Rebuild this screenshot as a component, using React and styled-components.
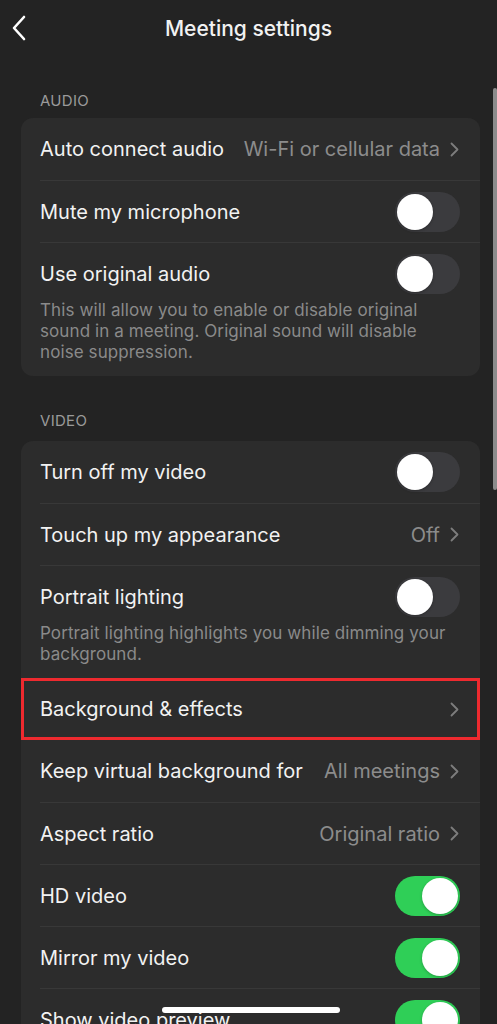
import styled, { createGlobalStyle } from "styled-components";

const GlobalStyle = createGlobalStyle`
  html, body {
    margin: 0;
    padding: 0;
    background: #232323;
  }
  body {
    font-family: Inter, "Noto Sans", sans-serif;
    -webkit-font-smoothing: antialiased;
  }
`;

const Screen = styled.div`
  position: relative;
  width: 497px;
  height: 1024px;
  overflow: hidden;
  background: #232323;
  color: #f2f2f2;
`;

const Header = styled.div`
  height: 56px;
  display: grid;
  grid-template-columns: 56px 1fr 56px;
  align-items: center;
`;

const BackButton = styled.div`
  display: flex;
  align-items: center;
  padding-left: 11px;
`;

const Title = styled.div`
  text-align: center;
  font-size: 21px;
  font-weight: 500;
`;

const SectionLabel = styled.div`
  padding: 35px 0 0 40px;
  height: ${(p) => (p.$tall ? "30px" : "27px")};
  font-size: 15px;
  color: #9a9a9a;
  letter-spacing: 0.3px;
`;

const Card = styled.div`
  margin: 0 17px 0 21px;
  background: #2c2c2c;
  border-radius: 12px;
  overflow: hidden;
`;

const Item = styled.div`
  position: relative;
  padding-left: 19px;
  ${(p) => (p.$highlight ? "outline: 3px solid #ee2a2f; outline-offset: -3px;" : "")}
  & + & > div:first-child {
    border-top: 1px solid #383838;
  }
`;

const Row = styled.div`
  height: 62px;
  box-sizing: border-box;
  display: flex;
  align-items: center;
  padding-right: 20px;
`;

const Label = styled.div`
  flex: 1;
  font-size: 20px;
  white-space: nowrap;
`;

const Value = styled.div`
  display: flex;
  align-items: center;
  gap: 10px;
  font-size: 20px;
  color: #8c8c8c;
  white-space: nowrap;
  padding-right: 1px;
`;

const Description = styled.div`
  margin-top: -4px;
  padding: 0 20px 13px 0;
  font-size: 17px;
  line-height: 21px;
  letter-spacing: 0.1px;
  color: #8a8a8a;
`;

const Track = styled.div`
  width: 65px;
  height: 40px;
  border-radius: 20px;
  background: ${(p) => (p.$on ? "#2fcf57" : "#3b3b3e")};
  display: flex;
  align-items: center;
  justify-content: ${(p) => (p.$on ? "flex-end" : "flex-start")};
  padding: 0 2px;
  box-sizing: border-box;
`;

const Knob = styled.div`
  width: 36px;
  height: 36px;
  border-radius: 50%;
  background: #ffffff;
  box-shadow: 0 1px 3px rgba(0, 0, 0, 0.25);
`;

const ScrollBar = styled.div`
  position: absolute;
  right: 0;
  top: 88px;
  width: 4px;
  height: 402px;
  border-radius: 2px;
  background: #8c8c8c;
`;

const HomeIndicator = styled.div`
  position: absolute;
  left: 162px;
  top: 1007px;
  width: 178px;
  height: 6px;
  border-radius: 3px;
  background: #ffffff;
`;

const Chevron = () => (
  <svg width="9" height="15" viewBox="0 0 9 15">
    <path d="M1.5 1.5 L7.5 7.5 L1.5 13.5" fill="none" stroke="#7d7d7d" strokeWidth="1.8" strokeLinecap="round" strokeLinejoin="round" />
  </svg>
);

const Toggle = ({ on }) => (
  <Track $on={on}>
    <Knob />
  </Track>
);

const Setting = ({ label, value, toggle, on, desc, highlight }) => (
  <Item $highlight={highlight}>
    <Row>
      <Label>{label}</Label>
      {toggle ? (
        <Toggle on={on} />
      ) : (
        <Value>
          {value}
          <Chevron />
        </Value>
      )}
    </Row>
    {desc && <Description>{desc}</Description>}
  </Item>
);

export default function App() {
  return (
    <Screen>
      <GlobalStyle />
      <Header>
        <BackButton>
          <svg width="16" height="26" viewBox="0 0 16 26">
            <path d="M13 2 L3 13 L13 24" fill="none" stroke="#ffffff" strokeWidth="2.6" strokeLinecap="round" strokeLinejoin="round" />
          </svg>
        </BackButton>
        <Title>Meeting settings</Title>
        <div />
      </Header>

      <SectionLabel>AUDIO</SectionLabel>
      <Card>
        <Setting label="Auto connect audio" value="Wi-Fi or cellular data" />
        <Setting label="Mute my microphone" toggle />
        <Setting
          label="Use original audio"
          toggle
          desc="This will allow you to enable or disable original sound in a meeting. Original sound will disable noise suppression."
        />
      </Card>

      <SectionLabel $tall>VIDEO</SectionLabel>
      <Card>
        <Setting label="Turn off my video" toggle />
        <Setting label="Touch up my appearance" value="Off" />
        <Setting
          label="Portrait lighting"
          toggle
          desc="Portrait lighting highlights you while dimming your background."
        />
        <Setting label="Background & effects" value="" highlight />
        <Setting label="Keep virtual background for" value="All meetings" />
        <Setting label="Aspect ratio" value="Original ratio" />
        <Setting label="HD video" toggle on />
        <Setting label="Mirror my video" toggle on />
        <Setting label="Show video preview" toggle on />
      </Card>

      <ScrollBar />
      <HomeIndicator />
    </Screen>
  );
}
